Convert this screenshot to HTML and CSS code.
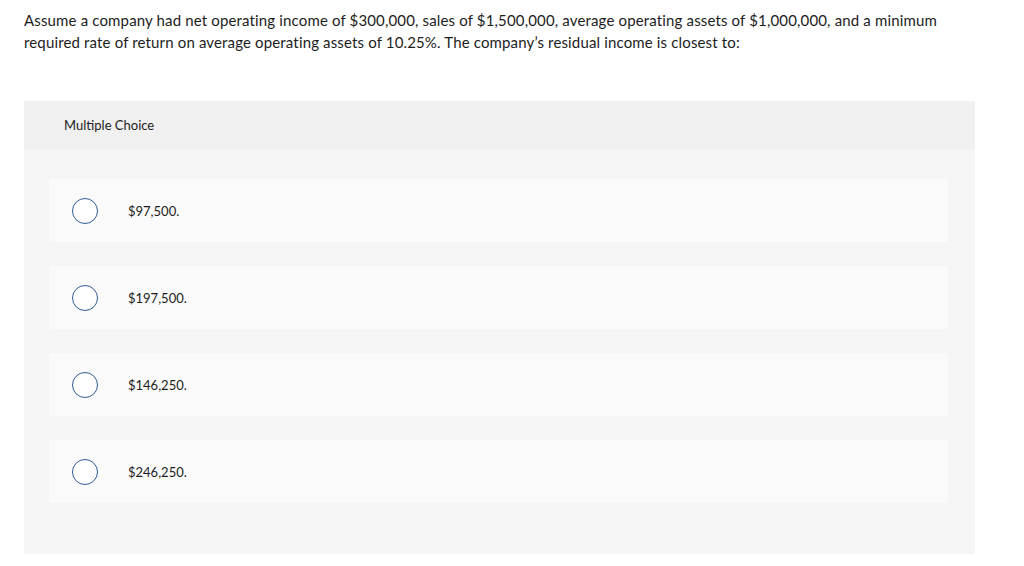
FILE: index.html
```html
<!DOCTYPE html>
<html>
<head>
<meta charset="utf-8">
<link rel="stylesheet" href="styles.css">
</head>
<body>
<div class="page">
  <p class="question">Assume a company had net operating income of $300,000, sales of $1,500,000, average operating assets of $1,000,000, and a minimum required rate of return on average operating assets of 10.25%. The company’s residual income is closest to:</p>
  <div class="mc">
    <div class="mc-head">Multiple Choice</div>
    <div class="mc-body">
      <div class="opt"><span class="radio"></span><span class="label">$97,500.</span></div>
      <div class="opt"><span class="radio"></span><span class="label">$197,500.</span></div>
      <div class="opt"><span class="radio"></span><span class="label">$146,250.</span></div>
      <div class="opt"><span class="radio"></span><span class="label">$246,250.</span></div>
    </div>
  </div>
</div>
</body>
</html>
```
FILE: styles.css
```css
html, body {
  margin: 0;
  padding: 0;
  background: #fff;
}
body {
  font-family: Lato, "Liberation Sans", sans-serif;
  color: #1d1d1d;
}
.page {
  padding: 9px 49px 0 24px;
}
.question {
  margin: 0;
  font-size: 15px;
  line-height: 22px;
  letter-spacing: 0.15px;
  max-width: 940px;
}
.mc {
  margin-top: 48px;
  width: 951px;
  border-radius: 2px;
  overflow: hidden;
}
.mc-head {
  background: #f0f0f0;
  height: 48px;
  display: flex;
  align-items: center;
  padding-left: 40px;
  font-size: 13px;
}
.mc-body {
  background: #f5f5f5;
  padding: 30px 27px 51px 25px;
  display: flex;
  flex-direction: column;
  gap: 24px;
}
.opt {
  height: 63px;
  background: #fafafa;
  border-radius: 2px;
  display: flex;
  align-items: center;
  padding-left: 23px;
}
.radio {
  width: 24px;
  height: 24px;
  border: 1px solid #2f5b93;
  border-radius: 50%;
  background: #fff;
  flex: none;
}
.label {
  margin-left: 30px;
  font-size: 13px;
}
```
